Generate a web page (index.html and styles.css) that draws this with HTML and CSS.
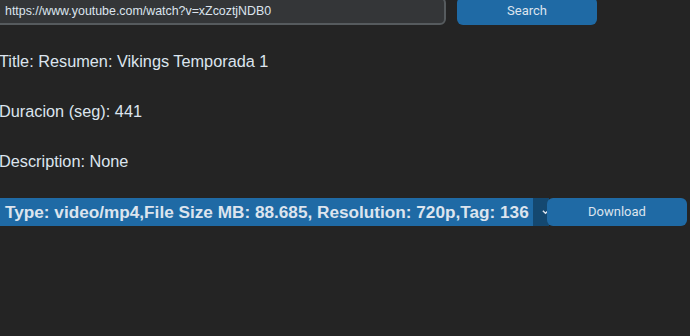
FILE: index.html
```html
<!DOCTYPE html>
<html>
<head>
<meta charset="utf-8">
<link rel="stylesheet" href="styles.css">
</head>
<body>
<div class="app">
  <div class="top-row">
    <div class="entry">https://www.youtube.com/watch?v=xZcoztjNDB0</div>
    <div class="btn search">Search</div>
  </div>
  <div class="label l1">Title: Resumen: Vikings Temporada 1</div>
  <div class="label l2">Duracion (seg): 441</div>
  <div class="label l3">Description: None</div>
  <div class="dl-row">
    <div class="option">
      <span class="opt-text">Type: video/mp4,File Size MB: 88.685, Resolution: 720p,Tag: 136</span>
      <span class="opt-arrow"><svg width="8" height="6" viewBox="0 0 8 6"><path d="M1 1.5 L4 4.5 L7 1.5" fill="none" stroke="#DCE4EE" stroke-width="1.6"/></svg></span>
    </div>
    <div class="btn download">Download</div>
  </div>
</div>
</body>
</html>
```
FILE: styles.css
```css
html, body {
  margin: 0;
  padding: 0;
  background: #242424;
  width: 690px;
  height: 336px;
  overflow: hidden;
}
.app {
  display: flex;
  flex-direction: column;
  margin-top: -3px;
}
.top-row {
  display: flex;
  height: 28px;
  margin-left: -6px;
}
.entry {
  box-sizing: border-box;
  width: 452px;
  height: 28px;
  background: #343638;
  border: 2px solid #565B5E;
  border-radius: 6px;
  color: #DCE4EE;
  font-family: "Liberation Sans", Arial, sans-serif;
  font-size: 12.4px;
  line-height: 25px;
  padding-left: 9px;
}
.btn {
  box-sizing: border-box;
  width: 140px;
  height: 28px;
  background: #1F6AA5;
  border-radius: 6px;
  color: #DCE4EE;
  font-family: Roboto, "DejaVu Sans", sans-serif;
  font-size: 13px;
  line-height: 28px;
  text-align: center;
}
.search {
  margin-left: 11px;
}
.label {
  color: #DCE4EE;
  font-family: "Liberation Sans", Arial, sans-serif;
  font-size: 16.3px;
  height: 18px;
  line-height: 18px;
  margin-left: -1px;
}
.l1 { margin-top: 27px; }
.l2 { margin-top: 32px; }
.l3 { margin-top: 32px; }
.dl-row {
  display: flex;
  margin-top: 28px;
  height: 28px;
  margin-left: -6px;
}
.option {
  display: flex;
  width: 555px;
  height: 28px;
  background: #1F6AA5;
  border-radius: 6px 0 0 6px;
  overflow: hidden;
}
.opt-text {
  flex: 1;
  color: #DCE4EE;
  font-family: "Liberation Sans", Arial, sans-serif;
  font-weight: bold;
  font-size: 17.2px;
  line-height: 28px;
  padding-left: 11px;
  white-space: nowrap;
  overflow: hidden;
}
.opt-arrow {
  box-sizing: border-box;
  width: 16px;
  background: #144870;
  display: flex;
  align-items: center;
  padding-left: 9px;
  overflow: hidden;
}
.download {
  margin-left: -2px;
  position: relative;
}
```
